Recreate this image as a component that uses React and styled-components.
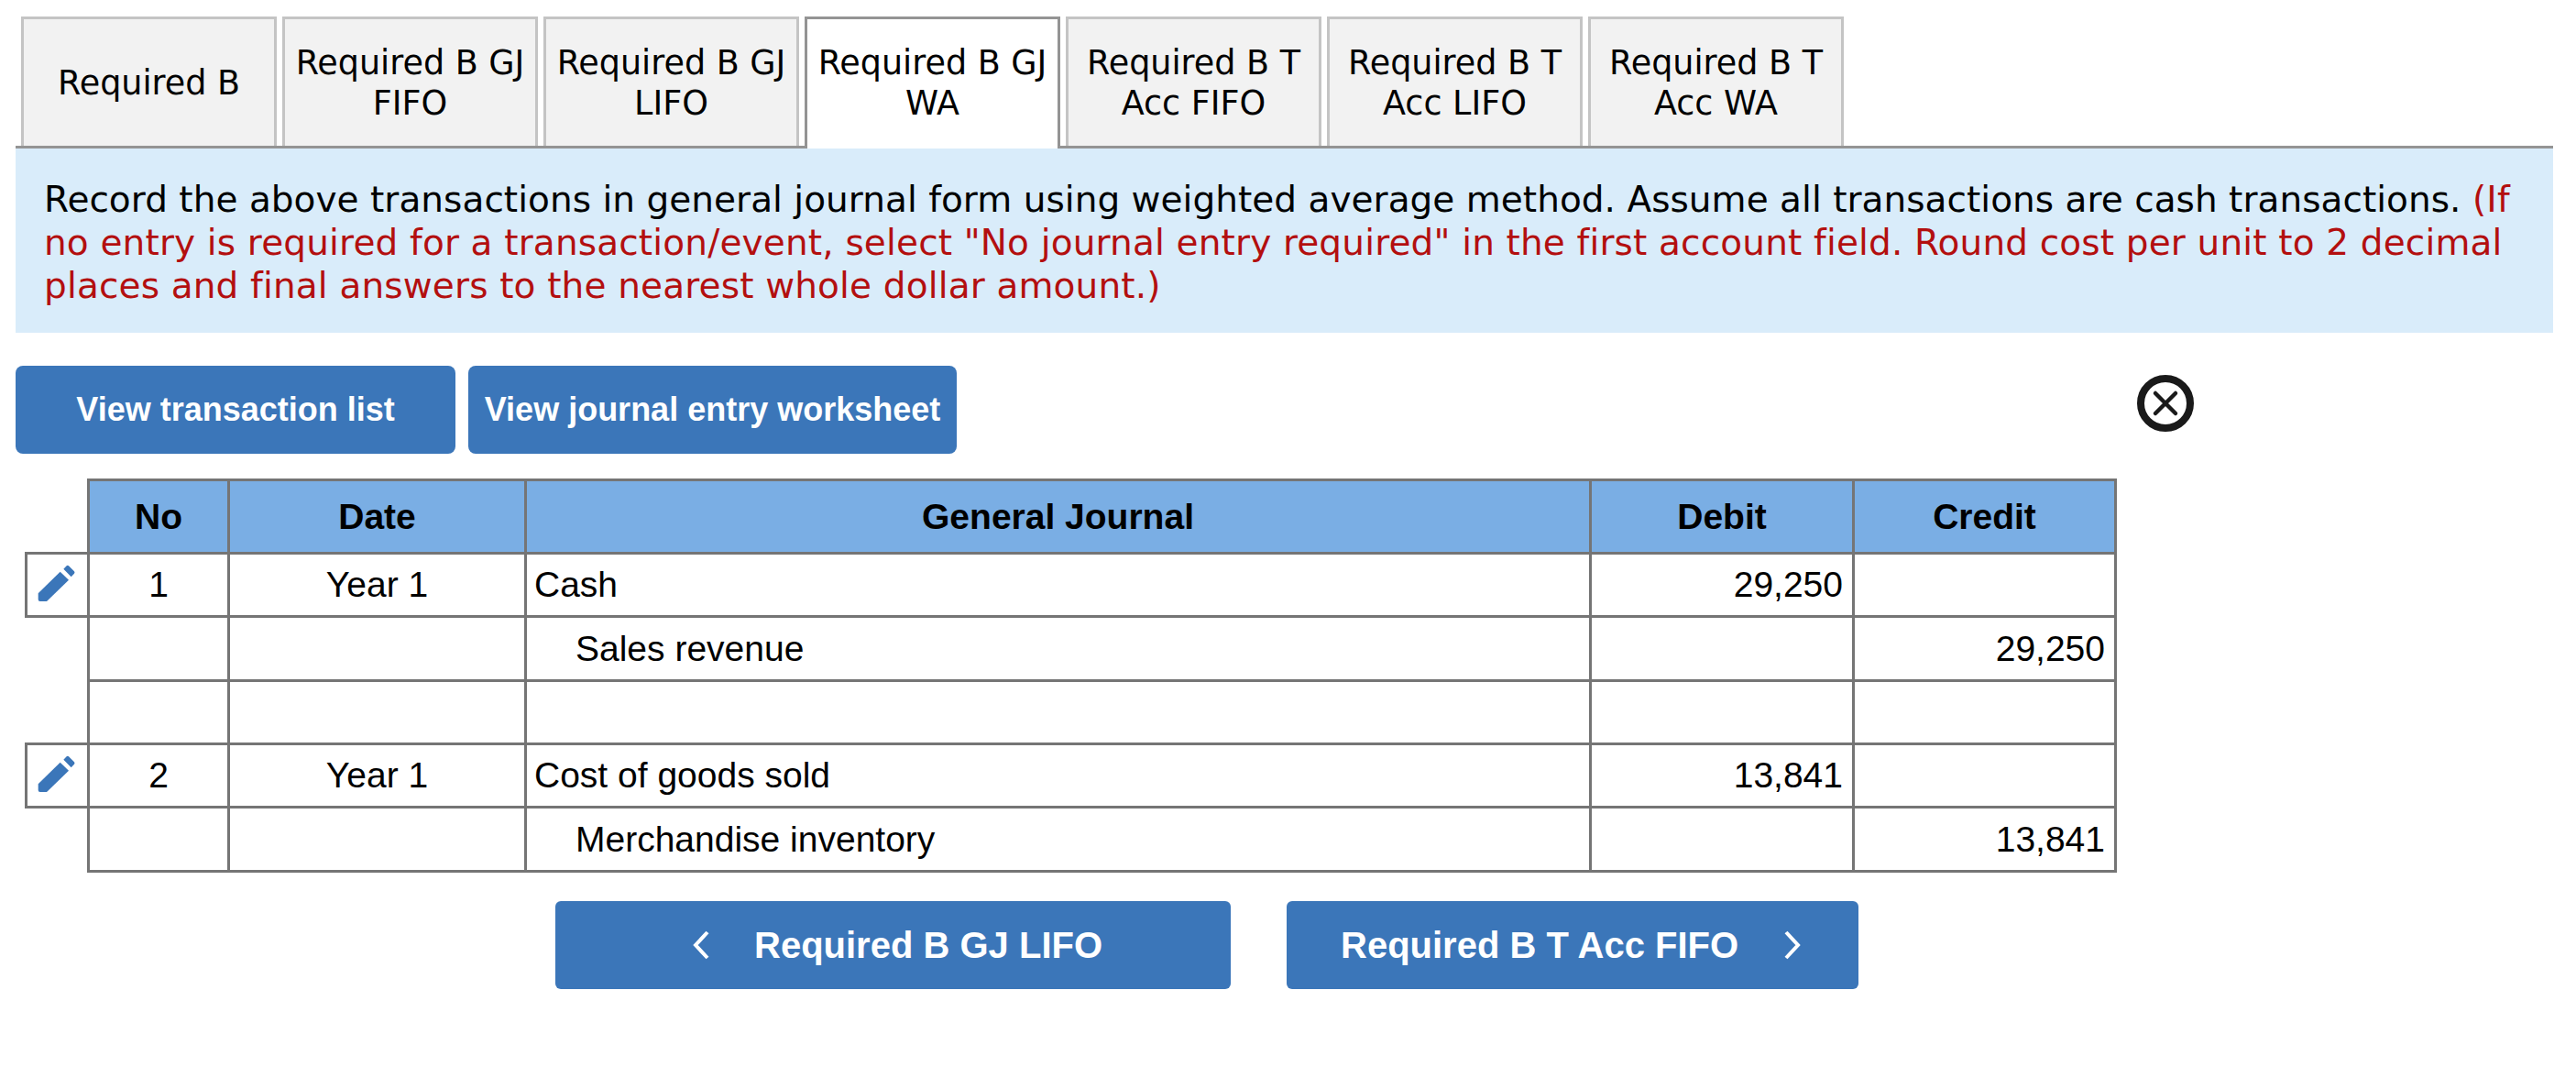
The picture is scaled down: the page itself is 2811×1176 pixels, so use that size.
import React from "react";
import styled, { createGlobalStyle } from "styled-components";

const Global = createGlobalStyle`
  html, body { margin: 0; padding: 0; background: #fff; }
  body { font-family: "Liberation Sans", Arial, sans-serif; color: #000; }
`;

const Page = styled.main`
  width: 2811px;
  min-height: 1176px;
  box-sizing: border-box;
  padding: 18px 25px 0 17px;
`;

const TabList = styled.div`
  display: flex;
  gap: 6px;
  padding-left: 6px;
  border-bottom: 3px solid #949494;
`;

const Tab = styled.div`
  box-sizing: border-box;
  width: 279px;
  height: ${(p) => (p.$active ? "144px" : "141px")};
  margin-bottom: ${(p) => (p.$active ? "-3px" : "0")};
  display: flex;
  align-items: center;
  justify-content: center;
  text-align: center;
  padding: 2px 0 ${(p) => (p.$active ? "3px" : "0")};
  background: ${(p) => (p.$active ? "#fff" : "#f2f2f2")};
  border: 3px solid ${(p) => (p.$active ? "#949494" : "#c4c4c4")};
  border-bottom: none;
  font-family: "DejaVu Sans", Verdana, sans-serif;
  font-size: 36.5px;
  line-height: 44px;
  position: relative;
  z-index: ${(p) => (p.$active ? 1 : 0)};
`;

const Panel = styled.section`
  width: 2769px;
  box-sizing: border-box;
  padding: 32px 31px 28px;
  background: #d9ecfa;
  font-family: "DejaVu Sans", Verdana, sans-serif;
  font-size: 39px;
  line-height: 47px;
  letter-spacing: 0.03px;
`;

const Note = styled.span`
  color: #b30f0f;
  letter-spacing: 0.15px;
`;

const Toolbar = styled.div`
  display: flex;
  justify-content: space-between;
  align-items: flex-start;
  width: 2377px;
  margin-top: 36px;
`;

const ToolGroup = styled.div`
  display: flex;
  gap: 14px;
`;

const ToolButton = styled.button`
  box-sizing: border-box;
  width: ${(p) => p.$width}px;
  height: 96px;
  padding: 0;
  border: none;
  border-radius: 8px;
  background: #3b76b9;
  color: #fff;
  font-family: "Liberation Sans", Arial, sans-serif;
  font-weight: 700;
  font-size: 36px;
`;

const CloseIcon = styled.svg`
  width: 62px;
  height: 62px;
  margin-top: 10px;
  display: block;
`;

const Journal = styled.table`
  table-layout: fixed;
  width: 2280px;
  margin: 27px 0 0 10px;
  border-collapse: collapse;
  font-size: 39px;
`;

const HeadCell = styled.th`
  height: 77px;
  padding: 0;
  background: #7aaee4;
  border: 3px solid #757575;
  font-weight: 700;
`;

const Gutter = styled.td`
  padding: 0;
  border: none;
  ${(p) => p.$edit && "border: 3px solid #757575;"}
  text-align: center;
  vertical-align: middle;
`;

const Cell = styled.td`
  height: ${(p) => p.$height}px;
  padding: 0 ${(p) => (p.$align === "right" ? "10px" : "8px")} 0 ${(p) => (p.$indent ? "53px" : "8px")};
  box-sizing: border-box;
  border: 3px solid #757575;
  text-align: ${(p) => p.$align || "left"};
  white-space: nowrap;
`;

const PencilSvg = styled.svg`
  display: block;
  width: 44px;
  height: 44px;
  margin: 0 auto;
`;

const NavRow = styled.nav`
  display: flex;
  gap: 61px;
  margin: 31px 0 0 589px;
`;

const NavButton = styled.button`
  box-sizing: border-box;
  width: ${(p) => p.$width}px;
  height: 96px;
  padding: 0 0 0 ${(p) => p.$lead}px;
  display: flex;
  align-items: center;
  gap: ${(p) => p.$gap}px;
  border: none;
  border-radius: 6px;
  background: #3b76b9;
  color: #fff;
  font-family: "Liberation Sans", Arial, sans-serif;
  font-weight: 700;
  font-size: 40px;
`;

const Chevron = styled.svg`
  width: 19px;
  height: 32px;
  flex: none;
`;

const Pencil = () => (
  <PencilSvg viewBox="0 0 132 132" aria-hidden="true">
    <path d="M2 94 L74 23 L102 50 L30 120 L8 120 Q2 120 2 114 Z" fill="#3b76b9" />
    <path d="M85 14 L95 4 Q98 1 102 4 L120 22 Q123 26 120 29 L110 40 Z" fill="#3b76b9" />
  </PencilSvg>
);

const tabs = [
  ["Required B"],
  ["Required B GJ", "FIFO"],
  ["Required B GJ", "LIFO"],
  ["Required B GJ", "WA"],
  ["Required B T", "Acc FIFO"],
  ["Required B T", "Acc LIFO"],
  ["Required B T", "Acc WA"],
];

const rows = [
  { h: 69, edit: true, no: "1", date: "Year 1", account: "Cash", debit: "29,250" },
  { h: 70, account: "Sales revenue", indent: true, credit: "29,250" },
  { h: 69 },
  { h: 69, edit: true, no: "2", date: "Year 1", account: "Cost of goods sold", debit: "13,841" },
  { h: 70, account: "Merchandise inventory", indent: true, credit: "13,841" },
];

export default function App() {
  return (
    <Page>
      <Global />
      <TabList>
        {tabs.map((lines, i) => (
          <Tab key={i} $active={i === 3}>
            <span>
              {lines.map((l, j) => (
                <React.Fragment key={j}>
                  {j > 0 && <br />}
                  {l}
                </React.Fragment>
              ))}
            </span>
          </Tab>
        ))}
      </TabList>
      <Panel>
        Record the above transactions in general journal form using weighted average method. Assume all transactions are cash transactions.{" "}
        <Note>
          (If no entry is required for a transaction/event, select "No journal entry required" in the first account field. Round cost per unit to 2 decimal places and final answers to the nearest whole dollar amount.)
        </Note>
      </Panel>
      <Toolbar>
        <ToolGroup>
          <ToolButton $width={480}>View transaction list</ToolButton>
          <ToolButton $width={533}>View journal entry worksheet</ToolButton>
        </ToolGroup>
        <CloseIcon viewBox="0 0 62 62" aria-label="close">
          <circle cx="31" cy="31" r="27" fill="none" stroke="#1a1a1a" strokeWidth="8" />
          <path d="M20 20 L42 42 M42 20 L20 42" stroke="#1a1a1a" strokeWidth="4.5" strokeLinecap="round" />
        </CloseIcon>
      </Toolbar>
      <Journal>
        <colgroup>
          <col style={{ width: 68 }} />
          <col style={{ width: 153 }} />
          <col style={{ width: 324 }} />
          <col style={{ width: 1162 }} />
          <col style={{ width: 287 }} />
          <col style={{ width: 286 }} />
        </colgroup>
        <thead>
          <tr>
            <Gutter />
            <HeadCell>No</HeadCell>
            <HeadCell>Date</HeadCell>
            <HeadCell>General Journal</HeadCell>
            <HeadCell>Debit</HeadCell>
            <HeadCell>Credit</HeadCell>
          </tr>
        </thead>
        <tbody>
          {rows.map((r, i) => (
            <tr key={i}>
              <Gutter $edit={r.edit}>{r.edit && <Pencil />}</Gutter>
              <Cell $height={r.h} $align="center">{r.no}</Cell>
              <Cell $height={r.h} $align="center">{r.date}</Cell>
              <Cell $height={r.h} $indent={r.indent}>{r.account}</Cell>
              <Cell $height={r.h} $align="right">{r.debit}</Cell>
              <Cell $height={r.h} $align="right">{r.credit}</Cell>
            </tr>
          ))}
        </tbody>
      </Journal>
      <NavRow>
        <NavButton $width={737} $lead={150} $gap={48}>
          <Chevron viewBox="0 0 19 32" aria-hidden="true">
            <path d="M16 2 L3 16 L16 30" fill="none" stroke="#fff" strokeWidth="4" />
          </Chevron>
          <span>Required B GJ LIFO</span>
        </NavButton>
        <NavButton $width={624} $lead={59} $gap={49}>
          <span>Required B T Acc FIFO</span>
          <Chevron viewBox="0 0 19 32" aria-hidden="true">
            <path d="M3 2 L16 16 L3 30" fill="none" stroke="#fff" strokeWidth="4" />
          </Chevron>
        </NavButton>
      </NavRow>
    </Page>
  );
}
